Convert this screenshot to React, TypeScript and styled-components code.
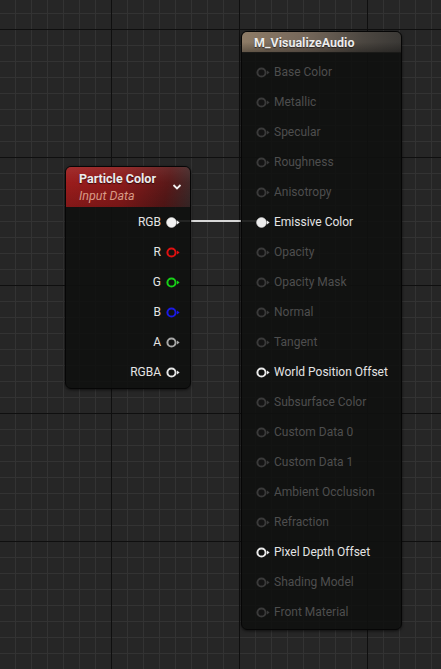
import React from "react";
import styled, { createGlobalStyle } from "styled-components";

const Global = createGlobalStyle`
  html, body { margin: 0; padding: 0; background: #262626; }
  body { width: 441px; height: 669px; overflow: hidden; font-family: Roboto, "Liberation Sans", sans-serif; }
  #root { width: 441px; height: 669px; }
`;

const Canvas = styled.div`
  position: relative;
  width: 441px;
  height: 669px;
  overflow: hidden;
  background-color: #262626;
  background-image:
    linear-gradient(to right, #0f0f0f 0 1px, transparent 1px),
    linear-gradient(to bottom, #0f0f0f 0 1px, transparent 1px),
    linear-gradient(to right, #333333 0 1px, transparent 1px),
    linear-gradient(to bottom, #333333 0 1px, transparent 1px);
  background-size: 128px 128px, 128px 128px, 16px 16px, 16px 16px;
  background-position: 111px 0, 0 29px, 15px 0, 0 13px;
`;

const Wires = styled.svg`
  position: absolute;
  left: 0;
  top: 0;
  width: 441px;
  height: 669px;
`;

const Node = styled.div<{ $x: number; $y: number; $w: number }>`
  position: absolute;
  left: ${(p) => p.$x}px;
  top: ${(p) => p.$y}px;
  width: ${(p) => p.$w}px;
  box-sizing: border-box;
  border: 1px solid #060606;
  border-radius: 6px;
  background: rgba(16, 17, 16, 0.9);
  box-shadow: 0 1px 3px rgba(0, 0, 0, 0.6);
  display: flex;
  flex-direction: column;
  overflow: hidden;
`;

const RedHeader = styled.div`
  height: 40px;
  box-sizing: border-box;
  padding: 4px 8px 0 13px;
  display: flex;
  align-items: flex-start;
  justify-content: space-between;
  background:
    linear-gradient(to bottom, rgba(255, 255, 255, 0.08), rgba(0, 0, 0, 0) 40%, rgba(0, 0, 0, 0.15)),
    linear-gradient(100deg, #9b1c1c 0%, #8a1a1a 45%, #5a1818 80%, #3c2a2a 100%);
`;

const TitleBlock = styled.div`
  display: flex;
  flex-direction: column;
`;

const Title = styled.div`
  color: #ececec;
  font-weight: 700;
  font-size: 12.5px;
  line-height: 15px;
  text-shadow: 0 1px 1px rgba(0, 0, 0, 0.6);
`;

const Subtitle = styled.div`
  color: #d99a85;
  font-style: italic;
  font-size: 12.5px;
  line-height: 15px;
  margin-top: 2px;
`;

const Chevron = styled.svg`
  margin-top: 12px;
  width: 10px;
  height: 8px;
`;

const TanHeader = styled.div`
  height: 21px;
  box-sizing: border-box;
  padding: 0 0 0 12px;
  display: flex;
  align-items: center;
  border-bottom: 1px solid #1a1a18;
  background:
    linear-gradient(to bottom, rgba(0, 0, 0, 0) 50%, rgba(0, 0, 0, 0.3)),
    linear-gradient(100deg, #8e7c67 0%, #75675a 40%, #4c4741 75%, #3a3835 100%);
`;

const Rows = styled.div<{ $pad: string }>`
  display: flex;
  flex-direction: column;
  padding: ${(p) => p.$pad};
`;

const OutRow = styled.div`
  height: 30px;
  display: flex;
  align-items: center;
  justify-content: flex-end;
  gap: 5px;
  padding-right: 9px;
`;

const InRow = styled.div`
  height: 30px;
  display: flex;
  align-items: center;
  gap: 3px;
  padding-left: 14px;
`;

const Label = styled.span<{ $active?: boolean }>`
  font-size: 12px;
  line-height: 14px;
  color: ${(p) => (p.$active ? "#e4e4e4" : "#4e4e4e")};
  white-space: nowrap;
`;

const PinSvg = styled.svg`
  width: 15px;
  height: 13px;
  flex: none;
`;

function Pin({ color, filled, dim }: { color: string; filled?: boolean; dim?: boolean }) {
  return (
    <PinSvg viewBox="0 0 15 13">
      <circle
        cx="5.5"
        cy="6.5"
        r={filled ? 4.8 : 4.1}
        fill={filled ? color : dim ? "#141414" : "none"}
        stroke={color}
        strokeWidth={filled ? 0.8 : 2}
      />
      <polygon points="11,4.5 13.6,6.5 11,8.5" fill={color} />
    </PinSvg>
  );
}

const outputs = [
  { name: "RGB", color: "#f2f2f2", filled: true },
  { name: "R", color: "#e01010" },
  { name: "G", color: "#17d017" },
  { name: "B", color: "#1a1ae6" },
  { name: "A", color: "#a8a8a8" },
  { name: "RGBA", color: "#e6e6e6" },
];

const inputs: { name: string; active?: boolean; filled?: boolean }[] = [
  { name: "Base Color" },
  { name: "Metallic" },
  { name: "Specular" },
  { name: "Roughness" },
  { name: "Anisotropy" },
  { name: "Emissive Color", active: true, filled: true },
  { name: "Opacity" },
  { name: "Opacity Mask" },
  { name: "Normal" },
  { name: "Tangent" },
  { name: "World Position Offset", active: true },
  { name: "Subsurface Color" },
  { name: "Custom Data 0" },
  { name: "Custom Data 1" },
  { name: "Ambient Occlusion" },
  { name: "Refraction" },
  { name: "Pixel Depth Offset", active: true },
  { name: "Shading Model" },
  { name: "Front Material" },
];

export default function App() {
  return (
    <>
      <Global />
      <Canvas>
        <Wires viewBox="0 0 441 669">
          <line x1="176" y1="221" x2="258" y2="221" stroke="#d8d8d8" strokeWidth="2" />
        </Wires>

        <Node $x={65} $y={166} $w={126}>
          <RedHeader>
            <TitleBlock>
              <Title>Particle Color</Title>
              <Subtitle>Input Data</Subtitle>
            </TitleBlock>
            <Chevron viewBox="0 0 10 8">
              <polyline points="1.5,2 5,5.5 8.5,2" fill="none" stroke="#f0f0f0" strokeWidth="1.8" />
            </Chevron>
          </RedHeader>
          <Rows $pad="0 0 1px 0">
            {outputs.map((o) => (
              <OutRow key={o.name}>
                <Label $active>{o.name}</Label>
                <Pin color={o.color} filled={o.filled} />
              </OutRow>
            ))}
          </Rows>
        </Node>

        <Node $x={241} $y={31} $w={161}>
          <TanHeader>
            <Title>M_VisualizeAudio</Title>
          </TanHeader>
          <Rows $pad="4px 0 2px 0">
            {inputs.map((i) => (
              <InRow key={i.name}>
                <Pin color={i.active ? "#ececec" : "#3a3a3a"} filled={i.filled} dim={!i.active} />
                <Label $active={i.active}>{i.name}</Label>
              </InRow>
            ))}
          </Rows>
        </Node>
      </Canvas>
    </>
  );
}
